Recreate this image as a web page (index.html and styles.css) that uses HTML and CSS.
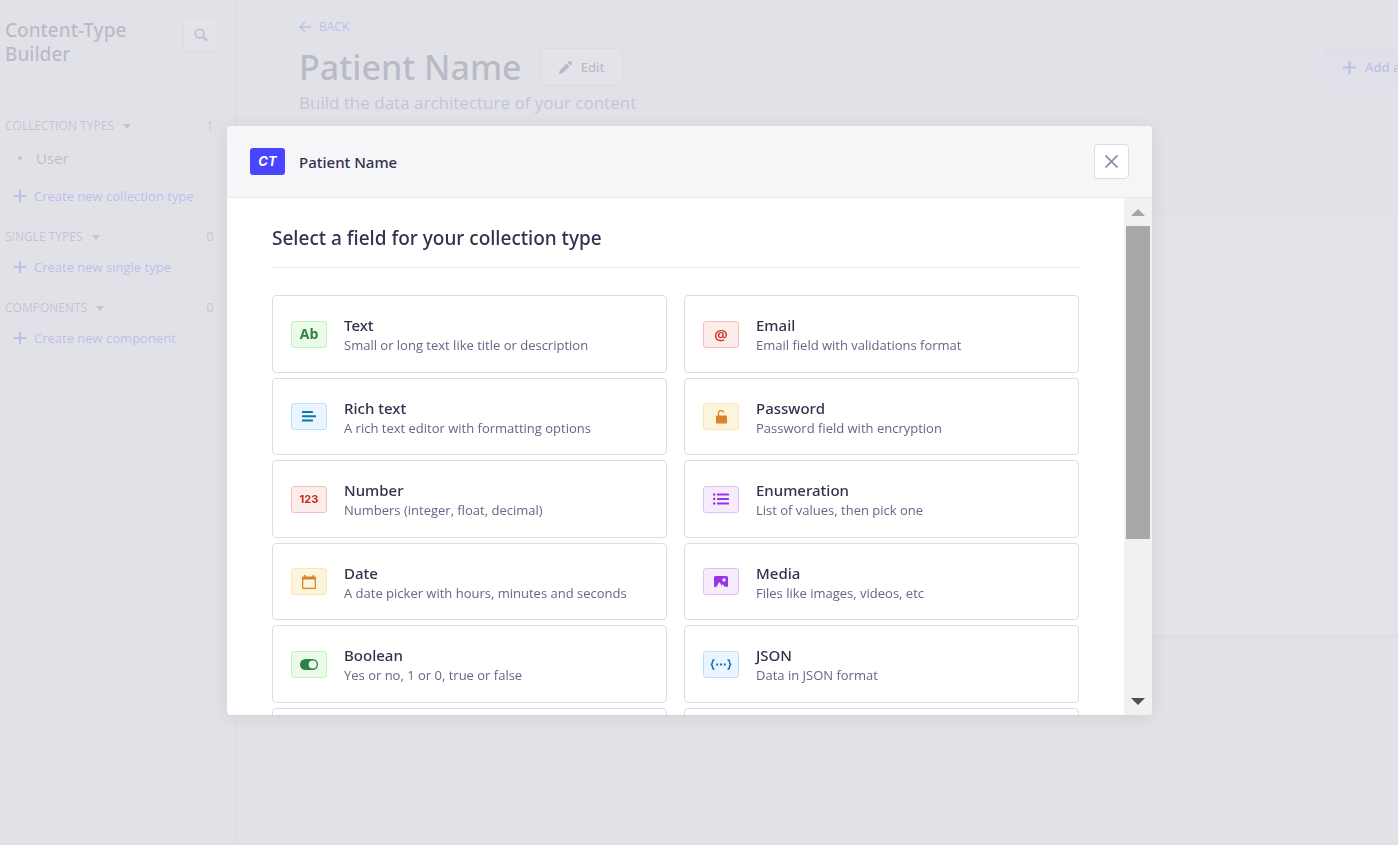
FILE: index.html
```html
<!DOCTYPE html>
<html lang="en">
<head>
    <meta charset="UTF-8">
    <meta name="viewport" content="width=device-width, initial-scale=1.0">
    <title>Content-Type Builder</title>
    <link rel="stylesheet" href="styles.css">
</head>
<body>
    <div class="app">
        <aside class="sidebar">
            <div class="sidebar-top">
                <h2>Content-Type Builder</h2>
                <button class="icon-button" type="button" aria-label="Search">
                    <svg width="14" height="14" viewBox="0 0 14 14" fill="none" stroke="#666687" stroke-width="2"><circle cx="5.6" cy="5.6" r="4.3"/><path d="M8.8 8.8l4.4 3.9" stroke-width="2.6"/></svg>
                </button>
            </div>
            <hr class="short-line">

            <nav>
                <section class="group">
                    <div class="group-head">
                        <span>COLLECTION TYPES</span>
                        <svg width="8" height="5" viewBox="0 0 8 5" fill="#666687"><path d="M0 0h8L4 5z"/></svg>
                        <span class="count">1</span>
                    </div>
                    <a class="entry" href="#user">User</a>
                    <a class="create" href="#new-collection">
                        <svg width="12" height="12" viewBox="0 0 12 12" fill="#4945ff"><path d="M5 0h2v5h5v2H7v5H5V7H0V5h5z"/></svg>
                        Create new collection type
                    </a>
                </section>
                <section class="group">
                    <div class="group-head">
                        <span>SINGLE TYPES</span>
                        <svg width="8" height="5" viewBox="0 0 8 5" fill="#666687"><path d="M0 0h8L4 5z"/></svg>
                        <span class="count">0</span>
                    </div>
                    <a class="create" href="#new-single">
                        <svg width="12" height="12" viewBox="0 0 12 12" fill="#4945ff"><path d="M5 0h2v5h5v2H7v5H5V7H0V5h5z"/></svg>
                        Create new single type
                    </a>
                </section>
                <section class="group">
                    <div class="group-head">
                        <span>COMPONENTS</span>
                        <svg width="8" height="5" viewBox="0 0 8 5" fill="#666687"><path d="M0 0h8L4 5z"/></svg>
                        <span class="count">0</span>
                    </div>
                    <a class="create" href="#new-component">
                        <svg width="12" height="12" viewBox="0 0 12 12" fill="#4945ff"><path d="M5 0h2v5h5v2H7v5H5V7H0V5h5z"/></svg>
                        Create new component
                    </a>
                </section>
            </nav>
        </aside>

        <main>
            <a class="back" href="#back">
                <svg width="12" height="12" viewBox="0 0 12 12" fill="none" stroke="#4945ff" stroke-width="1.4"><path d="M12 6H1M6 1L1 6l5 5"/></svg>
                BACK
            </a>
            <div class="title-row">
                <div class="title-left">
                    <h1>Patient Name</h1>
                    <button class="btn" type="button">
                        <svg width="13" height="13" viewBox="0 0 13 13" fill="#32324d"><path d="M0 13l.7-3.6 7-7 2.900 2.900-7 7zM8.600 1.600L9.800.4c.5-.5 1.200-.5 1.700 0l1.100 1.100c.5.5.5 1.200 0 1.700l-1.200 1.200z"/></svg>
                        Edit
                    </button>
                </div>
                <button class="btn btn-secondary" type="button">
                    <svg width="13" height="13" viewBox="0 0 12 12" fill="#4945ff"><path d="M5 0h2v5h5v2H7v5H5V7H0V5h5z"/></svg>
                    Add another field
                </button>
            </div>
            <p class="subtitle">Build the data architecture of your content</p>
            <div class="panel">
                <div class="panel-head"></div>
            </div>
        </main>
    </div>

    <div class="overlay">
        <div class="modal" role="dialog" aria-modal="true" aria-labelledby="modal-name">
            <header class="modal-header">
                <span class="ct">CT</span>
                <span class="modal-name" id="modal-name">Patient Name</span>
                <button class="close" type="button" aria-label="Close">
                    <svg width="13" height="13" viewBox="0 0 13 13" fill="none" stroke="#8e8ea9" stroke-width="1.800"><path d="M.5.5l12 12M12.500.5l-12 12"/></svg>
                </button>
            </header>
            <div class="modal-body">
                <div class="modal-content">
                    <h2>Select a field for your collection type</h2>
                    <div class="fields">
                        <button class="field" type="button">
                            <span class="badge green ab">Ab</span>
                            <span class="info"><strong>Text</strong><small>Small or long text like title or description</small></span>
                        </button>
                        <button class="field" type="button">
                            <span class="badge red at">@</span>
                            <span class="info"><strong>Email</strong><small>Email field with validations format</small></span>
                        </button>
                        <button class="field" type="button">
                            <span class="badge blue">
                                <svg width="14" height="11" viewBox="0 0 14 11" fill="#0c75af"><rect width="11" height="2" rx=".5"/><rect y="4.200" width="14" height="2" rx=".5"/><rect y="8.500" width="11" height="2" rx=".5"/></svg>
                            </span>
                            <span class="info"><strong>Rich text</strong><small>A rich text editor with formatting options</small></span>
                        </button>
                        <button class="field" type="button">
                            <span class="badge yellow">
                                <svg width="11" height="14" viewBox="0 0 11 14" fill="#d9822f"><rect y="5.500" width="11" height="8" rx="1"/><path d="M2.500 6V3.400a2.700 2.700 0 0 1 5.300-.8" fill="none" stroke="#d9822f" stroke-width="1.200"/></svg>
                            </span>
                            <span class="info"><strong>Password</strong><small>Password field with encryption</small></span>
                        </button>
                        <button class="field" type="button">
                            <span class="badge red num">123</span>
                            <span class="info"><strong>Number</strong><small>Numbers (integer, float, decimal)</small></span>
                        </button>
                        <button class="field" type="button">
                            <span class="badge purple">
                                <svg width="16" height="12" viewBox="0 0 16 12" fill="#9736e8"><circle cx="1.200" cy="1.500" r="1.200"/><circle cx="1.200" cy="6" r="1.200"/><circle cx="1.200" cy="10.500" r="1.200"/><rect x="4" y=".5" width="12" height="2" rx=".5"/><rect x="4" y="5" width="12" height="2" rx=".5"/><rect x="4" y="9.500" width="12" height="2" rx=".5"/></svg>
                            </span>
                            <span class="info"><strong>Enumeration</strong><small>List of values, then pick one</small></span>
                        </button>
                        <button class="field" type="button">
                            <span class="badge yellow">
                                <svg width="14" height="14" viewBox="0 0 14 14" fill="#d9822f"><path fill-rule="evenodd" d="M2 0h1.500v1.500h7V0H12v1.500h1a1 1 0 0 1 1 1V13a1 1 0 0 1-1 1H1a1 1 0 0 1-1-1V2.500a1 1 0 0 1 1-1h1zM1.300 4.500v8.200h11.400V4.500z"/></svg>
                            </span>
                            <span class="info"><strong>Date</strong><small>A date picker with hours, minutes and seconds</small></span>
                        </button>
                        <button class="field" type="button">
                            <span class="badge purple">
                                <svg width="14" height="12" viewBox="0 0 14 12" fill="#9736e8"><path fill-rule="evenodd" d="M1.500 0h11A1.500 1.500 0 0 1 14 1.500V10a1.300 1.300 0 0 1-1.800.9L11.600 10l-1 1L9 8.200 7.800 9.500 5.300 6 2.500 10.800A1.500 1.500 0 0 1 0 9.700V1.500A1.500 1.500 0 0 1 1.500 0zM10 2.300a1.700 1.700 0 1 0 0 3.400 1.700 1.700 0 0 0 0-3.400z"/></svg>
                            </span>
                            <span class="info"><strong>Media</strong><small>Files like images, videos, etc</small></span>
                        </button>
                        <button class="field" type="button">
                            <span class="badge green">
                                <svg width="18" height="11" viewBox="0 0 18 11"><rect width="18" height="11" rx="5.500" fill="#2f8046"/><circle cx="12.700" cy="5.500" r="4" fill="#eafbe7"/></svg>
                            </span>
                            <span class="info"><strong>Boolean</strong><small>Yes or no, 1 or 0, true or false</small></span>
                        </button>
                        <button class="field" type="button">
                            <span class="badge blue">
                                <svg width="22" height="11" viewBox="0 0 22 11" fill="none" stroke="#0c75af" stroke-width="1.500"><path d="M4.500.8C2.600.8 2.500 1.500 2.500 3S2.200 5.300.8 5.500C2.200 5.700 2.500 6.500 2.500 8s.1 2.200 2 2.200M17.500.8c1.900 0 2 .7 2 2.200s.3 2.300 1.700 2.500c-1.400.2-1.700 1-1.700 2.500s-.1 2.200-2 2.200"/><path d="M6.200 5.500h2M10 5.500h2M13.800 5.500h2" stroke-width="2"/></svg>
                            </span>
                            <span class="info"><strong>JSON</strong><small>Data in JSON format</small></span>
                        </button>
                        <div class="field"></div>
                        <div class="field"></div>
                    </div>
                </div>
                <div class="scrollbar" aria-hidden="true">
                    <div class="scroll-arrow"><svg width="14" height="7" viewBox="0 0 14 7" fill="#a3a3a3"><path d="M7 0l7 7H0z"/></svg></div>
                    <div class="scroll-track"><div class="scroll-thumb"></div></div>
                    <div class="scroll-arrow"><svg width="14" height="7" viewBox="0 0 14 7" fill="#505050"><path d="M0 0h14L7 7z"/></svg></div>
                </div>
            </div>
        </div>
    </div>
</body>
</html>
```
FILE: styles.css
```css
* {
    box-sizing: border-box;
}

body {
    margin: 0;
    font-family: "Open Sans", "Noto Sans", sans-serif;
    font-size: 13px;
    line-height: 20px;
    color: #32324d;
    background-color: #f6f6f9;
    overflow: hidden;
}

h1, h2, p {
    margin: 0;
}

h1, h2, strong, .btn, .modal-name {
    font-family: "Noto Sans", sans-serif;
    font-weight: 500;
}

a {
    color: #4945ff;
    text-decoration: none;
}

button {
    font: inherit;
    color: inherit;
    cursor: pointer;
}

svg {
    display: block;
    flex: none;
}

.app {
    display: flex;
    min-height: 100vh;
    overflow: hidden;
}

/* Sidebar */
.sidebar {
    flex: 0 0 237px;
    padding: 17px 18px 0 5px;
    border-right: 1px solid #dcdce4;
}

.sidebar-top {
    display: flex;
    justify-content: space-between;
    align-items: flex-start;
}

.sidebar-top h2 {
    width: 140px;
    padding-top: 1px;
    font-size: 19px;
    line-height: 24px;
}

.icon-button, .close {
    display: flex;
    align-items: center;
    justify-content: center;
    width: 35px;
    height: 35px;
    padding: 0;
    background-color: #fff;
    border: 1px solid #dcdce4;
    border-radius: 4px;
}

.short-line {
    width: 27px;
    height: 1px;
    margin: 17px 0 32px;
    border: 0;
    background-color: #dcdce4;
}

.group {
    margin-bottom: 21px;
}

.group-head {
    display: flex;
    align-items: center;
    gap: 9px;
    height: 20px;
    font-size: 12px;
    color: #666687;
}

.count {
    width: 16px;
    margin-left: auto;
    text-align: center;
    background-color: #f0f0f5;
    border-radius: 4px;
}

.entry {
    display: flex;
    align-items: center;
    gap: 14px;
    padding-left: 13px;
    margin: 12px 0 18px;
    font-size: 15px;
    color: #4a4a6a;
}

.entry::before {
    content: "";
    width: 4px;
    height: 4px;
    border-radius: 50%;
    background-color: #666687;
}

.create {
    display: flex;
    align-items: center;
    gap: 8px;
    padding-left: 9px;
    margin-top: 10px;
}

/* Page */
main {
    flex: 1;
    min-width: 0;
    padding: 17px 0 0 62px;
}

.back {
    display: flex;
    align-items: center;
    gap: 8px;
    font-size: 12px;
}

.title-row {
    display: flex;
    align-items: center;
    height: 38px;
    margin-top: 11px;
}

.title-left {
    display: flex;
    align-items: center;
    gap: 18px;
    flex: 0 0 calc(100% - 74px);
}

.title-left h1 {
    font-size: 34px;
    line-height: 38px;
}

.btn {
    display: flex;
    align-items: center;
    gap: 9px;
    flex: none;
    height: 38px;
    padding: 0 18px;
    white-space: nowrap;
    background-color: #fff;
    border: 1px solid #dcdce4;
    border-radius: 4px;
}

.btn-secondary {
    color: #4945ff;
    background-color: #f0f0ff;
    border-color: #d9d8ff;
}

.subtitle {
    margin-top: 5px;
    font-size: 17px;
    line-height: 24px;
    color: #666687;
}

.panel {
    height: 420px;
    margin-top: 100px;
    background-color: #fff;
    box-shadow: 0 1px 4px rgba(33, 33, 52, 0.2);
}

.panel-head {
    height: 64px;
    border-bottom: 1px solid #eaeaef;
}

/* Modal */
.overlay {
    position: fixed;
    inset: 0;
    display: flex;
    align-items: center;
    justify-content: center;
    padding: 0 19px 4px 0;
    background-color: rgba(220, 220, 228, 0.8);
}

.modal {
    width: 925px;
    max-width: 100%;
    overflow: hidden;
    background-color: #fff;
    border-radius: 4px;
    box-shadow: 0 2px 16px rgba(33, 33, 52, 0.1);
}

.modal-header {
    display: flex;
    align-items: center;
    gap: 14px;
    height: 72px;
    padding: 0 23px;
    background-color: #f6f6f9;
    border-bottom: 1px solid #eaeaef;
}

.ct {
    width: 35px;
    height: 27px;
    font-family: Inter, sans-serif;
    font-size: 13px;
    line-height: 27px;
    font-style: italic;
    font-weight: 700;
    text-align: center;
    color: #fff;
    background-color: #4945ff;
    border-radius: 3px;
}

.modal-name {
    font-size: 15px;
}

.close {
    margin-left: auto;
}

.modal-body {
    display: flex;
    height: 517px;
}

.modal-content {
    flex: 1;
    padding: 27px 45px 0;
    overflow: auto;
    scrollbar-width: none;
}

.modal-content h2 {
    padding-bottom: 15px;
    margin-bottom: 27px;
    font-size: 19px;
    line-height: 27px;
    border-bottom: 1px solid #eaeaef;
}

.fields {
    display: grid;
    grid-template-columns: 1fr 1fr;
    grid-auto-rows: 78px 77px;
    gap: 5px 17px;
}

.field {
    display: flex;
    align-items: center;
    gap: 17px;
    padding: 0 18px;
    text-align: left;
    background-color: #fff;
    border: 1px solid #dcdce4;
    border-radius: 4px;
}

.badge {
    display: flex;
    align-items: center;
    justify-content: center;
    flex: none;
    width: 36px;
    height: 27px;
    border: 1px solid;
    border-radius: 3px;
}

.ab {
    font-size: 14px;
    font-weight: 700;
}

.at {
    font-size: 15px;
    font-weight: 600;
}

.num {
    font-family: Inter, sans-serif;
    font-size: 11px;
    font-weight: 700;
}

.green {
    color: #2f8046;
    background-color: #eafbe7;
    border-color: #c6f0c2;
}

.red {
    color: #c5281c;
    background-color: #fcecea;
    border-color: #f5c0b8;
}

.blue {
    background-color: #eaf5ff;
    border-color: #b8e1ff;
}

.yellow {
    background-color: #fdf4dc;
    border-color: #fae7b9;
}

.purple {
    background-color: #f6ecfc;
    border-color: #e0c1f4;
}

.info {
    padding-top: 2px;
}

.info strong, .info small {
    display: block;
}

.info strong {
    font-size: 15px;
}

.info small {
    font-size: 13px;
    color: #666687;
}

/* Scrollbar */
.scrollbar {
    display: flex;
    flex-direction: column;
    flex: 0 0 28px;
    background-color: #f1f1f1;
}

.scroll-arrow {
    display: flex;
    align-items: center;
    justify-content: center;
    height: 28px;
}

.scroll-track {
    flex: 1;
    padding: 0 2px;
}

.scroll-thumb {
    height: 68%;
    background-color: #a8a8a8;
}
```
